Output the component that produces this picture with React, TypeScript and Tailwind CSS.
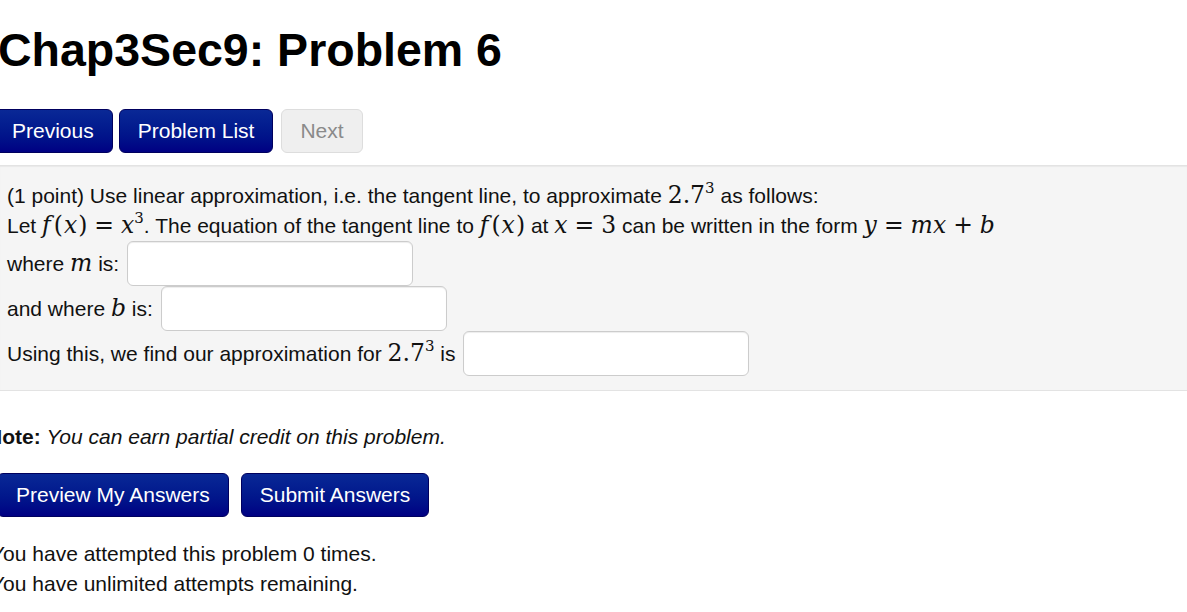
import React from "react";

const mathFont = { fontFamily: '"DejaVu Serif", "Liberation Serif", serif' };

function V({ children }: { children: React.ReactNode }) {
  return (
    <span className="text-[23.5px] italic leading-none" style={mathFont}>
      {children}
    </span>
  );
}

function N({ children }: { children: React.ReactNode }) {
  return (
    <span className="text-[23.5px] leading-none" style={mathFont}>
      {children}
    </span>
  );
}

function Op({ children }: { children: React.ReactNode }) {
  return (
    <span className="mx-[7px] text-[23.5px] leading-none" style={mathFont}>
      {children}
    </span>
  );
}

function Sup({ children }: { children: React.ReactNode }) {
  return (
    <span className="relative -top-[10px] text-[15px] leading-none" style={mathFont}>
      {children}
    </span>
  );
}

function Fx() {
  return (
    <span className="whitespace-nowrap">
      <span className="mr-[3px]">
        <V>f</V>
      </span>
      <N>(</N>
      <span className="px-[1px]">
        <V>x</V>
      </span>
      <N>)</N>
    </span>
  );
}

function AnswerInput() {
  return (
    <input
      type="text"
      className="ml-[8px] h-[45px] w-[286px] rounded-[6px] border border-[#cccccc] bg-white px-3 shadow-[inset_0_1px_1px_rgba(0,0,0,0.075)] outline-none"
    />
  );
}

const navBtn =
  "rounded-[6px] border border-[#00005e] bg-gradient-to-b from-[#0a2896] to-[#000083] h-[44px] px-[18px] text-white text-[21px] leading-[30px]";

export default function App() {
  return (
    <div
      className="min-h-screen w-[1187px] overflow-hidden bg-white text-[21px] leading-[30px] text-[#111]"
      style={{ fontFamily: '"Liberation Sans", Arial, sans-serif' }}
    >
      <h2 className="ml-[-2px] pt-[20px] text-[46.5px] font-bold leading-[60px] text-black">
        Chap3Sec9: Problem 6
      </h2>

      <div className="ml-[-7px] mt-[29px] flex items-start">
        <button className={navBtn}>Previous</button>
        <button className={`${navBtn} ml-[6px]`}>Problem List</button>
        <button className="ml-[8px] h-[44px] rounded-[6px] border border-[#dddddd] bg-[#efefef] px-[18px] text-[21px] leading-[30px] text-[#8a8a8a]">
          Next
        </button>
      </div>

      <div className="mt-[12px] border-y border-[#e3e3e3] bg-[#f5f5f5] pb-[14px] pl-[7px] pt-[15px] shadow-[inset_0_1px_1px_rgba(0,0,0,0.05)]">
        <div className="h-[30px] whitespace-nowrap">
          (1 point) Use linear approximation, i.e. the tangent line, to approximate <N>2.7</N>
          <Sup>3</Sup> as follows:
        </div>
        <div className="h-[30px] whitespace-nowrap">
          Let <Fx />
          <Op>=</Op>
          <V>x</V>
          <Sup>3</Sup>. The equation of the tangent line to <Fx /> at <V>x</V>
          <Op>=</Op>
          <N>3</N> can be written in the form <V>y</V>
          <Op>=</Op>
          <V>mx</V>
          <Op>+</Op>
          <V>b</V>
        </div>
        <div className="flex h-[45px] items-center">
          <span>
            where <V>m</V> is:
          </span>
          <AnswerInput />
        </div>
        <div className="flex h-[45px] items-center">
          <span>
            and where <V>b</V> is:
          </span>
          <AnswerInput />
        </div>
        <div className="flex h-[45px] items-center">
          <span>
            Using this, we find our approximation for <N>2.7</N>
            <Sup>3</Sup> is
          </span>
          <AnswerInput />
        </div>
      </div>

      <div className="ml-[-13px] mt-[31px]">
        <span className="font-bold">Note:</span> <i>You can earn partial credit on this problem.</i>
      </div>

      <div className="ml-[-3px] mt-[21px] flex">
        <button className={navBtn}>Preview My Answers</button>
        <button className={`${navBtn} ml-[12px]`}>Submit Answers</button>
      </div>

      <div className="ml-[-9px] mt-[22px]">
        <div>You have attempted this problem 0 times.</div>
        <div>You have unlimited attempts remaining.</div>
      </div>
    </div>
  );
}
